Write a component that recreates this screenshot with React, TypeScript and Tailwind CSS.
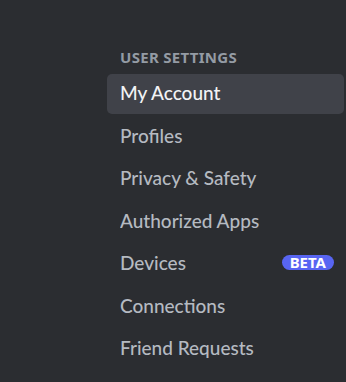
const items = [
  { label: "My Account", selected: true },
  { label: "Profiles" },
  { label: "Privacy & Safety" },
  { label: "Authorized Apps" },
  { label: "Devices", badge: "BETA" },
  { label: "Connections" },
  { label: "Friend Requests" },
];

export default function App() {
  return (
    <div
      className="h-[382px] w-[346px] overflow-hidden bg-[#2b2d31] pl-[107px] pt-[47px]"
      style={{ fontFamily: '"Noto Sans", "Open Sans", sans-serif' }}
    >
      <div className="mb-[7px] flex h-[20px] items-center pl-[13px] text-[15px] font-bold uppercase leading-[20px] tracking-[0.02em] text-[#949ba4]">
        User Settings
      </div>
      <nav className="flex w-[237px] flex-col font-['Lato',sans-serif]">
        {items.map((item) => (
          <div
            key={item.label}
            className={
              item.selected
                ? "mb-[2.5px] flex h-[40px] items-center rounded-[5px] bg-[#404249] pb-[1px] pl-[13px] pr-[10px] text-[19px] font-medium text-[#f2f3f5]"
                : "mb-[2.5px] flex h-[40px] items-center rounded-[5px] pb-[1px] pl-[13px] pr-[10px] text-[19px] font-medium text-[#b5bac1]"
            }
          >
            <span className="flex-1 truncate">{item.label}</span>
            {item.badge && (
              <span className="mb-[3px] flex h-[15px] items-center rounded-full bg-[#5865f2] px-[8px] font-['Noto_Sans',sans-serif] text-[15px] font-bold leading-none text-white">
                {item.badge}
              </span>
            )}
          </div>
        ))}
      </nav>
    </div>
  );
}
